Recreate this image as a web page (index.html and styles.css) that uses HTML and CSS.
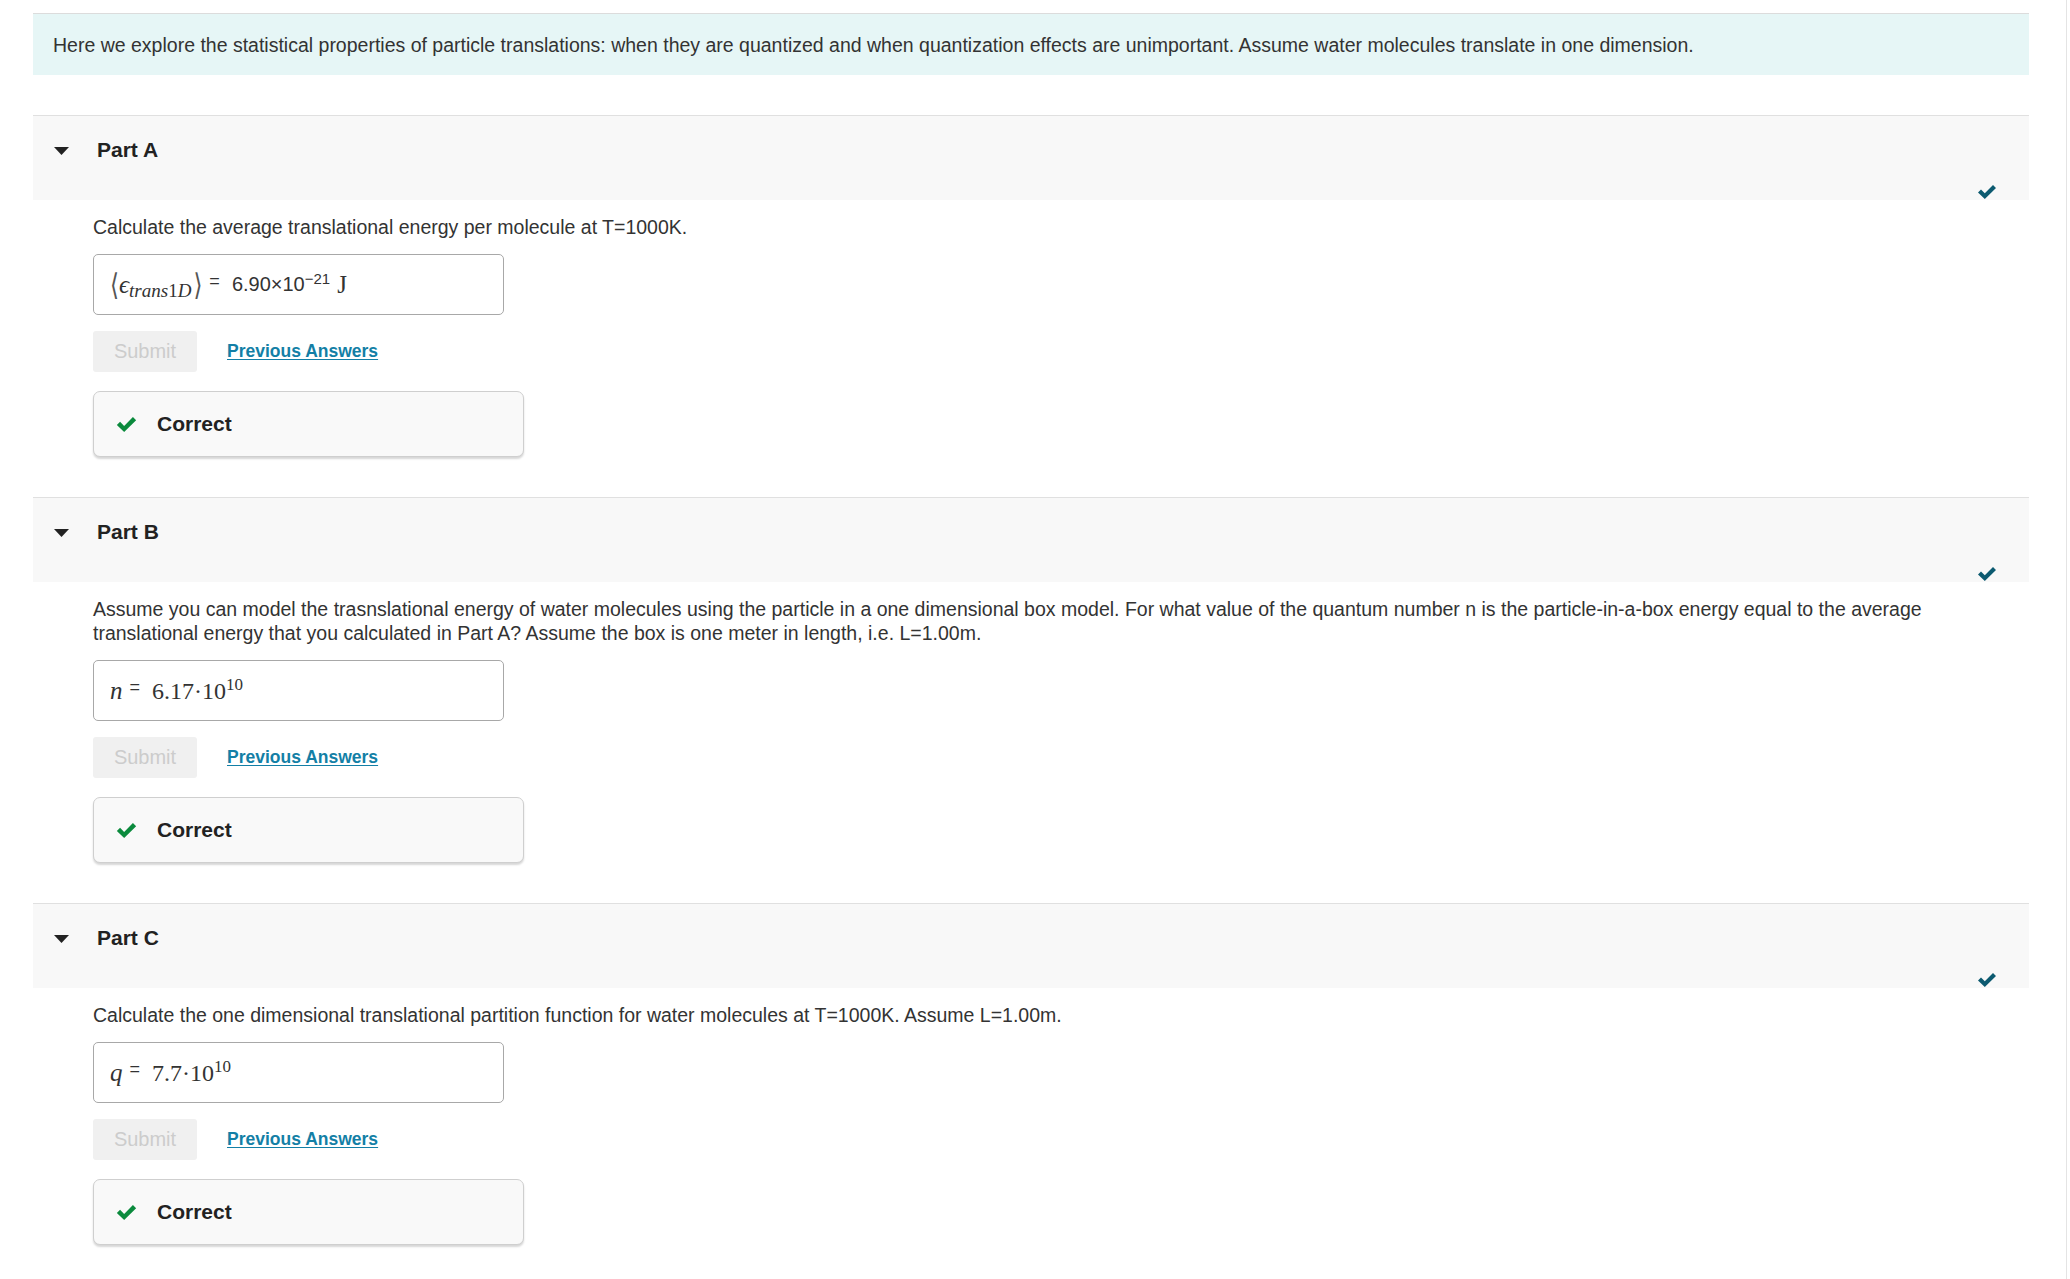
FILE: index.html
```html
<!DOCTYPE html>
<html lang="en">
<head>
<meta charset="utf-8">
<title>Particle translations</title>
<link rel="stylesheet" href="styles.css">
</head>
<body>
<div class="page">
  <div class="intro">Here we explore the statistical properties of particle translations: when they are quantized and when quantization effects are unimportant. Assume water molecules translate in one dimension.</div>

  <section class="part">
    <div class="part-header">
      <div class="part-title">
        <svg class="caret" width="15" height="8" viewBox="0 0 15 8"><path d="M0 0H15L7.5 8Z" fill="#222"/></svg>
        <span>Part A</span>
      </div>
      <svg class="done" width="18" height="14" viewBox="0 0 18 14"><path d="M0 7.5L3 4.5L6.8 8.3L15 0L18 3L6.8 14Z" fill="#0c5a70"/></svg>
    </div>
    <div class="part-body">
      <p class="question">Calculate the average translational energy per molecule at T=1000K.</p>
      <div class="answer">
        <span class="math"><span class="angle">⟨</span><span class="mvar">ϵ</span><span class="msub"><i>trans</i>1<i>D</i></span><span class="angle">⟩</span></span><span class="eq">=</span><span class="sans-val">6.90×10<sup>−21</sup></span><span class="unit">J</span>
      </div>
      <div class="actions">
        <button class="submit" disabled>Submit</button>
        <a class="prev" href="#">Previous Answers</a>
      </div>
      <div class="feedback">
        <svg class="ok" width="21" height="15" viewBox="0 0 18 14"><path d="M0 7.5L3 4.5L6.8 8.3L15 0L18 3L6.8 14Z" fill="#0b8a3d"/></svg>
        <span>Correct</span>
      </div>
    </div>
  </section>

  <section class="part">
    <div class="part-header">
      <div class="part-title">
        <svg class="caret" width="15" height="8" viewBox="0 0 15 8"><path d="M0 0H15L7.5 8Z" fill="#222"/></svg>
        <span>Part B</span>
      </div>
      <svg class="done" width="18" height="14" viewBox="0 0 18 14"><path d="M0 7.5L3 4.5L6.8 8.3L15 0L18 3L6.8 14Z" fill="#0c5a70"/></svg>
    </div>
    <div class="part-body">
      <p class="question">Assume you can model the trasnslational energy of water molecules using the particle in a one dimensional box model. For what value of the quantum number n is the particle-in-a-box energy equal to the average translational energy that you calculated in Part A? Assume the box is one meter in length, i.e. L=1.00m.</p>
      <div class="answer">
        <span class="math"><span class="mvar">n</span></span><span class="eq">=</span><span class="serif-val">6.17·10<sup>10</sup></span>
      </div>
      <div class="actions">
        <button class="submit" disabled>Submit</button>
        <a class="prev" href="#">Previous Answers</a>
      </div>
      <div class="feedback">
        <svg class="ok" width="21" height="15" viewBox="0 0 18 14"><path d="M0 7.5L3 4.5L6.8 8.3L15 0L18 3L6.8 14Z" fill="#0b8a3d"/></svg>
        <span>Correct</span>
      </div>
    </div>
  </section>

  <section class="part">
    <div class="part-header">
      <div class="part-title">
        <svg class="caret" width="15" height="8" viewBox="0 0 15 8"><path d="M0 0H15L7.5 8Z" fill="#222"/></svg>
        <span>Part C</span>
      </div>
      <svg class="done" width="18" height="14" viewBox="0 0 18 14"><path d="M0 7.5L3 4.5L6.8 8.3L15 0L18 3L6.8 14Z" fill="#0c5a70"/></svg>
    </div>
    <div class="part-body">
      <p class="question">Calculate the one dimensional translational partition function for water molecules at T=1000K. Assume L=1.00m.</p>
      <div class="answer">
        <span class="math"><span class="mvar">q</span></span><span class="eq">=</span><span class="serif-val">7.7·10<sup>10</sup></span>
      </div>
      <div class="actions">
        <button class="submit" disabled>Submit</button>
        <a class="prev" href="#">Previous Answers</a>
      </div>
      <div class="feedback">
        <svg class="ok" width="21" height="15" viewBox="0 0 18 14"><path d="M0 7.5L3 4.5L6.8 8.3L15 0L18 3L6.8 14Z" fill="#0b8a3d"/></svg>
        <span>Correct</span>
      </div>
    </div>
  </section>
</div>
</body>
</html>
```

FILE: styles.css
```css
html, body {
  margin: 0;
  padding: 0;
  background: #ffffff;
}

body {
  font-family: "Liberation Sans", Arial, sans-serif;
  color: #333333;
  font-size: 19.5px;
}

.page {
  width: 2067px;
  min-height: 1279px;
  box-sizing: border-box;
  border-right: 1px solid #e4e4e4;
  padding: 13px 0 40px 33px;
}

.page > * {
  width: 1996px;
}

.intro {
  box-sizing: border-box;
  height: 62px;
  border-top: 1px solid #dcdcdc;
  background: #e6f6f6;
  display: flex;
  align-items: center;
  padding-left: 20px;
  line-height: 24px;
  color: #333;
}

.part {
  margin-top: 40px;
}

.part-header {
  box-sizing: border-box;
  height: 85px;
  border-top: 1px solid #e0e0e0;
  background: #f8f8f8;
  display: flex;
  justify-content: space-between;
  padding: 0 33px 0 21px;
}

.part-title {
  display: flex;
  align-items: center;
  gap: 28px;
  height: 24px;
  margin-top: 22px;
  font-weight: bold;
  font-size: 21px;
  color: #222;
}

.caret {
  display: block;
  margin-top: 2px;
}

.done {
  align-self: flex-end;
  margin-bottom: 1px;
}

.part-body {
  padding: 15px 60px 0 60px;
}

.question {
  margin: 0;
  line-height: 24px;
  font-size: 19.5px;
  color: #333;
}

.answer {
  box-sizing: border-box;
  margin-top: 15px;
  width: 411px;
  height: 61px;
  border: 1px solid #a8a8a8;
  border-radius: 5px;
  background: #fff;
  display: flex;
  align-items: center;
  padding-left: 16px;
  color: #333;
  white-space: nowrap;
}

.math {
  font-family: "Liberation Serif", "DejaVu Serif", serif;
  font-size: 25px;
  display: inline-flex;
  align-items: baseline;
}

.angle {
  font-family: "DejaVu Serif", serif;
  font-weight: 200;
  font-size: 23px;
  color: #555;
  transform: scaleY(1.3);
  display: inline-block;
}

.mvar {
  font-style: italic;
}

.msub {
  font-size: 19px;
  position: relative;
  top: 4px;
  margin-right: 2px;
}

.eq {
  font-family: "Liberation Sans", Arial, sans-serif;
  font-size: 18px;
  margin: 0 12px 0 7px;
  position: relative;
  top: -3px;
}

.sans-val {
  font-size: 20px;
  color: #333;
}

.sans-val sup {
  font-size: 15px;
  vertical-align: 7px;
  line-height: 0;
}

.serif-val {
  font-family: "Liberation Serif", "DejaVu Serif", serif;
  font-size: 24px;
  color: #333;
  position: relative;
  top: 1px;
}

.serif-val sup {
  font-size: 17px;
  vertical-align: 9px;
  line-height: 0;
}

.unit {
  font-family: "Liberation Serif", "DejaVu Serif", serif;
  font-size: 25px;
  margin-left: 7px;
}

.actions {
  margin-top: 16px;
  display: flex;
  align-items: center;
  gap: 30px;
  height: 41px;
}

.submit {
  box-sizing: border-box;
  width: 104px;
  height: 41px;
  border: none;
  border-radius: 3px;
  background: #f0f0f0;
  color: #cccccc;
  font-family: "Liberation Sans", Arial, sans-serif;
  font-size: 20px;
  padding: 0;
}

.prev {
  font-weight: bold;
  font-size: 17.5px;
  color: #137fa6;
  text-decoration: underline;
  text-underline-offset: 2px;
}

.feedback {
  box-sizing: border-box;
  margin-top: 19px;
  width: 431px;
  height: 66px;
  border: 1px solid #cfcfcf;
  border-radius: 7px;
  background: #f9f9f9;
  box-shadow: 0 2px 2px rgba(0, 0, 0, 0.16);
  display: flex;
  align-items: center;
  gap: 20px;
  padding-left: 22px;
  font-weight: bold;
  font-size: 21px;
  color: #222;
}

.ok {
  display: block;
}
```
